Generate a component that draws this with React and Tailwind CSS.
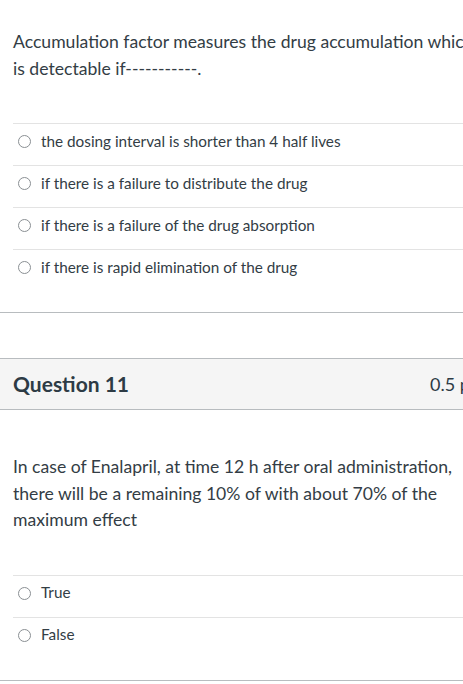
export default function App() {
  const Radio = () => (
    <span className="inline-block w-[13px] h-[13px] rounded-full border border-[#8a8f93] bg-white shrink-0" />
  );
  const Option = ({ label }) => (
    <div className="h-[42px] border-t border-[#e3e3e3] pl-[5px]">
      <div className="flex items-center h-[35px]">
        <Radio />
        <span className="ml-[10px] text-[15.3px] text-[#333d45] leading-none">{label}</span>
      </div>
    </div>
  );
  return (
    <div className="w-[463px] h-[684px] overflow-hidden bg-white" style={{ fontFamily: "Lato, 'Open Sans', sans-serif" }}>
      <div className="w-[497px]">
        <div className="px-[13px] pt-[29px]">
          <p className="w-[465px] text-[17.6px] leading-[26.5px] text-[#333d45]">
            Accumulation factor measures the drug accumulation which is detectable if-----------.
          </p>
          <div className="mt-[41px]">
            <Option label="the dosing interval is shorter than 4 half lives" />
            <Option label="if there is a failure to distribute the drug" />
            <Option label="if there is a failure of the drug absorption" />
            <Option label="if there is rapid elimination of the drug" />
          </div>
          <div className="h-[21px]" />
        </div>
        <div className="border-t border-[#b8bcbf] h-[46px]" />
        <div className="border-y border-[#b8bcbf] bg-[#f5f5f5] h-[52px] px-[13px] flex items-center justify-between">
          <span className="text-[21px] font-bold text-[#2d3b45]">Question 11</span>
          <span className="text-[18px] text-[#2d3b45]">0.5 pts</span>
        </div>
        <div className="px-[13px] pt-[44px]">
          <p className="w-[465px] text-[17.6px] leading-[26.5px] text-[#333d45]">
            In case of Enalapril, at time 12 h after oral administration, there will be a remaining 10% of with about 70% of the maximum effect
          </p>
          <div className="mt-[41px]">
            <Option label="True" />
            <Option label="False" />
          </div>
          <div className="h-[21px]" />
        </div>
        <div className="border-t border-[#b8bcbf] h-[10px]" />
      </div>
    </div>
  );
}
